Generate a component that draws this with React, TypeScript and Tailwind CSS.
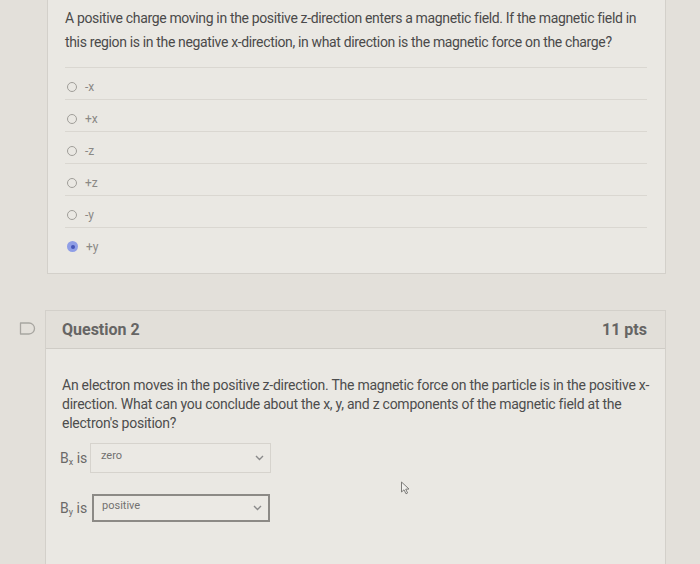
import React from 'react';

const options = ['-x', '+x', '-z', '+z', '-y', '+y'];

const Chevron = () => (
    <svg width="9" height="6" viewBox="0 0 9 6" className="shrink-0">
        <path d="M1 1 L4.5 4.5 L8 1" fill="none" stroke="#8a8a8a" strokeWidth="1.4" />
    </svg>
);

const Dropdown = ({ value, strong }: { value: string; strong?: boolean }) => (
    <div
        className={
            strong
                ? 'w-[178px] h-[28px] border-2 border-[#8c8a86] bg-[#ebe9e4] flex items-center justify-between pl-[8px] pr-[6px]'
                : 'w-[181px] h-[30px] border border-[#d6d3cd] bg-[#ebe9e4] flex items-center justify-between pl-[10px] pr-[6px]'
        }
    >
        <span className="text-[11px] text-[#727170] -mt-[4px]">{value}</span>
        <Chevron />
    </div>
);

export default function App() {
    return (
        <div
            className="w-[700px] h-[564px] overflow-hidden bg-[#e3e0da] relative"
            style={{ fontFamily: 'Roboto, "Open Sans", sans-serif' }}
        >
            {/* question 1 (continues above the top edge) */}
            <div className="flex">
                <div className="w-[47px] shrink-0" />
                <div className="w-[619px] bg-[#eae8e3] border-x border-b border-[#d3d0ca] px-[17px] pt-[6px] pb-[14px]">
                    <p className="text-[14px] leading-[24px] tracking-[-0.35px] text-[#4a4a4a] whitespace-nowrap">
                        A positive charge moving in the positive z-direction enters a magnetic field. If the magnetic field in
                        <br />
                        this region is in the negative x-direction, in what direction is the magnetic force on the charge?
                    </p>
                    <div className="mt-[13px] mr-[1px]">
                        {options.map((o, i) => (
                            <div
                                key={o}
                                className="h-[32px] border-t border-[#dad7d1] flex items-center pt-[6px] pl-[2px] gap-[8px]"
                            >
                                {i === 5 ? (
                                    <span className="w-[11px] h-[11px] rounded-full bg-[#8f9ee6] flex items-center justify-center">
                                        <span className="w-[4px] h-[4px] rounded-full bg-[#4556b8]" />
                                    </span>
                                ) : (
                                    <span className="w-[10px] h-[10px] rounded-full border border-[#a09e99]" />
                                )}
                                <span className="text-[12px] text-[#8a8986]">{o}</span>
                            </div>
                        ))}
                    </div>
                </div>
            </div>

            {/* question 2 */}
            <div className="flex mt-[36px]">
                <div className="w-[45px] shrink-0 pt-[12px] pl-[19px]">
                    <svg width="17" height="13" viewBox="0 0 17 13">
                        <path
                            d="M1.5 1 H10 A5.5 5.5 0 0 1 10 12 H1.5 Z"
                            fill="none"
                            stroke="#a8a6a1"
                            strokeWidth="1.3"
                            strokeLinejoin="round"
                        />
                    </svg>
                </div>
                <div className="w-[621px] bg-[#eae8e3] border border-[#d3d0ca] h-[260px]">
                    <div className="h-[38px] bg-[#e2dfd9] border-b border-[#cfccc6] flex items-center justify-between pl-[16px] pr-[18px]">
                        <span className="text-[16px] font-bold text-[#666564]">Question 2</span>
                        <span className="text-[16px] font-bold text-[#666564]">11 pts</span>
                    </div>
                    <div className="px-[16px] pt-[27px]">
                        <p className="text-[14px] leading-[19px] tracking-[-0.25px] text-[#4d4d4d] whitespace-nowrap">
                            An electron moves in the positive z-direction. The magnetic force on the particle is in the positive x-
                            <br />
                            direction. What can you conclude about the x, y, and z components of the magnetic field at the
                            <br />
                            electron's position?
                        </p>
                        <div className="mt-[10px] flex items-center gap-[4px] -ml-[2px]">
                            <span className="text-[14px] text-[#6a6968] whitespace-nowrap w-[26px]">
                                B<sub className="text-[9px]">x</sub> is
                            </span>
                            <Dropdown value="zero" />
                        </div>
                        <div className="mt-[21px] flex items-center gap-[4px] -ml-[2px]">
                            <span className="text-[14px] text-[#6a6968] whitespace-nowrap w-[28px]">
                                B<sub className="text-[9px]">y</sub> is
                            </span>
                            <Dropdown value="positive" strong />
                        </div>
                    </div>
                </div>
            </div>

            {/* mouse pointer */}
            <svg className="absolute left-[400px] top-[481px]" width="12" height="14" viewBox="0 0 12 14">
                <path
                    d="M1.5 1 L1.5 11 L4 8.8 L6 12.8 L7.6 12 L5.7 8.2 L9 8 Z"
                    fill="#f2f1ee"
                    stroke="#7d7c79"
                    strokeWidth="1"
                    strokeLinejoin="round"
                />
            </svg>
        </div>
    );
}
